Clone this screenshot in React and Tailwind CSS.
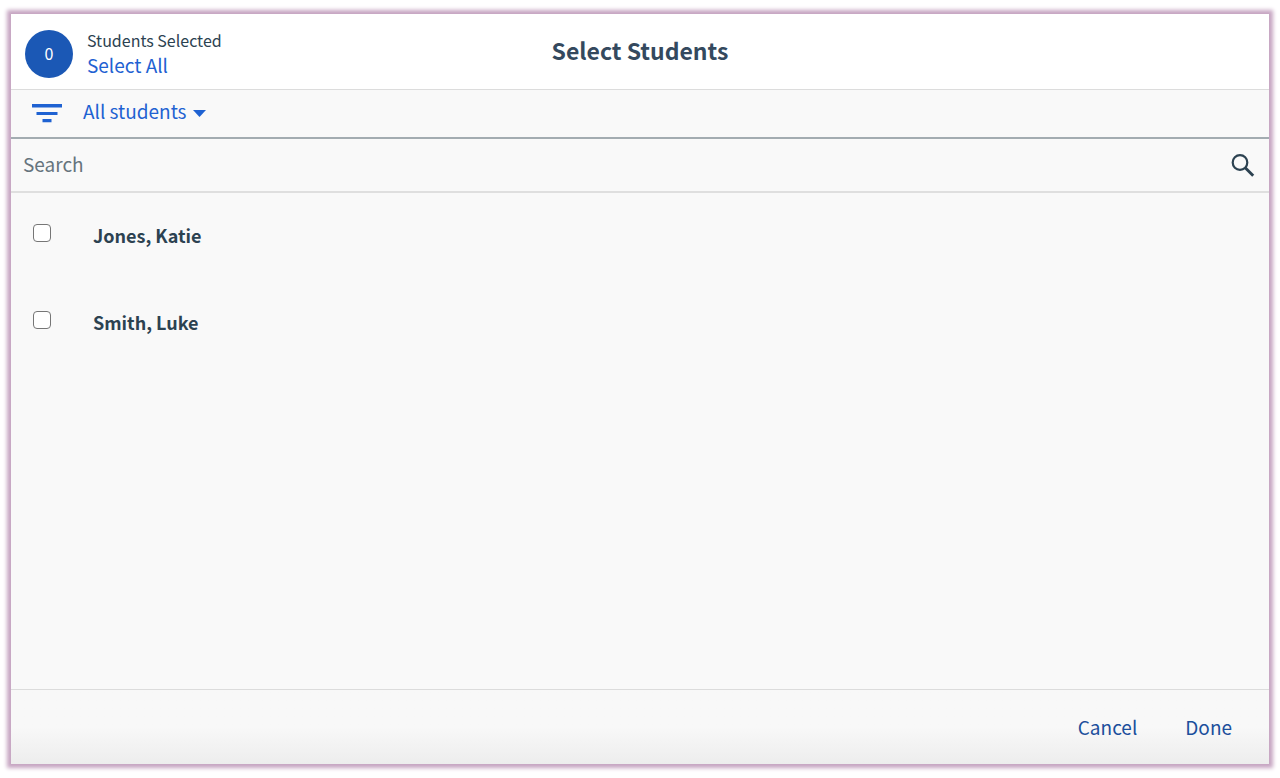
import { useState } from "react";

const students = [
  { id: "katie", name: "Jones, Katie" },
  { id: "luke", name: "Smith, Luke" },
];

const FilterIcon = () => (
  <svg width="30" height="20" viewBox="0 0 30 20" fill="currentColor" aria-hidden="true">
    <path d="M0 0h30v3.500H0zM4.500 8h21v3H4.500zM10.500 15h9v3.300h-9z" />
  </svg>
);

const CaretIcon = () => (
  <svg width="13" height="7" viewBox="0 0 13 7" fill="currentColor" aria-hidden="true">
    <path d="M0 0h13L6.500 7z" />
  </svg>
);

const SearchIcon = () => (
  <svg width="24" height="24" viewBox="0 0 24 24" fill="none" stroke="currentColor" aria-hidden="true">
    <circle cx="9" cy="9.500" r="7.300" strokeWidth="2.200" />
    <path d="M14.200 14.700l8 8" strokeWidth="2.900" />
  </svg>
);

const App = () => {
  const [selected, setSelected] = useState([]);
  const [query, setQuery] = useState("");

  const toggle = (id) =>
    setSelected(selected.includes(id) ? selected.filter((s) => s !== id) : [...selected, id]);

  const visible = students.filter((s) => s.name.toLowerCase().includes(query.toLowerCase()));

  return (
    <div className="flex min-h-screen bg-white px-[11px] py-[14px] font-['Noto_Sans_CJK_SC',sans-serif] text-[19px] leading-6 text-[#2c4251]">
      <main className="flex flex-1 flex-col bg-[#f9f9f9] shadow-[0_0_4px_4px_#c6a5c2]">
        <header className="grid h-19 grid-cols-[1fr_auto_1fr] items-center border-b border-[#dcdcdc] bg-white px-[14px]">
          <div className="flex items-center gap-[14px]">
            <span className="mt-1 flex size-12 items-center justify-center rounded-full bg-[#1b58b5] pb-[2px] text-base text-white">
              {selected.length}
            </span>
            <div className="flex flex-col items-start pt-[2px] leading-[25px]">
              <span className="text-base leading-6">Students Selected</span>
              <button
                className="cursor-pointer text-[#1f62d2]"
                onClick={() => setSelected(students.map((s) => s.id))}
              >
                Select All
              </button>
            </div>
          </div>
          <h1 className="pb-1 text-[23px] font-bold text-[#34495e]">Select Students</h1>
        </header>

        <div className="flex h-[49px] items-center gap-[21px] border-b-2 border-[#a3acb1] px-[21px] text-[#1f62d2]">
          <FilterIcon />
          <button className="flex cursor-pointer items-center gap-[6px] pb-[6px]">
            All students
            <span className="pt-[6px]">
              <CaretIcon />
            </span>
          </button>
        </div>

        <div className="flex h-[54px] items-center border-b-2 border-[#dfdfdf] px-3">
          <input
            type="text"
            aria-label="Search"
            placeholder="Search"
            value={query}
            onChange={(e) => setQuery(e.target.value)}
            className="min-w-0 flex-1 bg-transparent pb-[2px] outline-none placeholder:text-[#66747d]"
          />
          <button aria-label="Run search" className="cursor-pointer px-[2px]">
            <SearchIcon />
          </button>
        </div>

        <ul className="flex-1">
          {visible.map((s) => (
            <li key={s.id}>
              <label className="flex h-[87px] cursor-pointer items-start gap-[42px] px-[22px] py-[31px] text-lg leading-[22px] font-bold">
                <input
                  type="checkbox"
                  checked={selected.includes(s.id)}
                  onChange={() => toggle(s.id)}
                  className="size-[18px] appearance-none rounded-[4px] border border-[#767676] bg-white checked:bg-[#1b58b5]"
                />
                {s.name}
              </label>
            </li>
          ))}
        </ul>

        <footer className="flex h-[75px] items-center justify-end gap-12 border-t border-[#dcdcdc] bg-gradient-to-b from-[#f8f8f8] from-50% to-[#ededed] px-[37px] text-[#1c4f9c]">
          <button className="cursor-pointer">Cancel</button>
          <button className="cursor-pointer">Done</button>
        </footer>
      </main>
    </div>
  );
};

export default App;
